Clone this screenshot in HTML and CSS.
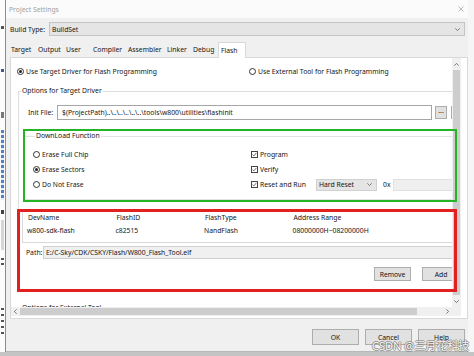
FILE: index.html
```html
<!DOCTYPE html>
<html>
<head>
<meta charset="utf-8">
<link rel="stylesheet" href="styles.css">
</head>
<body>
<div class="screen">
  <div class="bgwin">
    <div class="bm m1"></div>
    <div class="bm m2"></div>
    <div class="bm m3"></div>
    <div class="bm m4"></div>
    <div class="bm m5"></div>
    <div class="bm m6"></div>
    <div class="bm m7"></div>
    <div class="bm m8"></div>
  </div>
  <div class="dialog">
    <div class="titlebar">
      <span class="title">Project Settings</span>
      <svg class="close" width="6" height="6" viewBox="0 0 6 6"><path d="M0.5 0.5L5.5 5.5M5.5 0.5L0.5 5.5" stroke="#a8a8a8" stroke-width="0.8" fill="none"/></svg>
    </div>
    <div class="buildrow">
      <span class="lbl">Build Type:</span>
      <div class="combo wide"><span>BuildSet</span><svg width="5" height="3" viewBox="0 0 5 3"><path d="M0.3 0.3L2.5 2.6L4.7 0.3" stroke="#666" stroke-width="0.8" fill="none"/></svg></div>
    </div>
    <div class="tabs">
      <div class="tab t1">Target</div>
      <div class="tab t2">Output</div>
      <div class="tab t3">User</div>
      <div class="tab t4">Compiler</div>
      <div class="tab t5">Assembler</div>
      <div class="tab t6">Linker</div>
      <div class="tab t7">Debug</div>
      <div class="tab t8 active">Flash</div>
    </div>
    <div class="pane">
      <div class="viewport">
        <div class="content">
          <div class="moderow">
            <div class="opt mode1"><span class="radio on"></span>Use Target Driver for Flash Programming</div>
            <div class="opt"><span class="radio"></span>Use External Tool for Flash Programming</div>
          </div>
          <fieldset class="grp opts">
            <legend>Options for Target Driver</legend>
            <div class="initrow">
              <span class="initlbl">Init File:</span>
              <div class="field initfield">$(ProjectPath)..\..\..\..\..\..\tools\w800\utilities\flashinit</div>
              <div class="btn sm">...</div>
              <div class="btn sm"></div>
            </div>
            <fieldset class="grp dl">
              <legend>DownLoad Function</legend>
              <div class="dlgrid">
                <div class="opt"><span class="radio"></span>Erase Full Chip</div>
                <div class="opt"><span class="check"><svg width="5" height="5" viewBox="0 0 5 5"><path d="M0.6 2.6L1.9 3.9L4.4 0.9" stroke="#333" stroke-width="0.7" fill="none"/></svg></span>Program</div>
                <div class="opt"><span class="radio on"></span>Erase Sectors</div>
                <div class="opt"><span class="check"><svg width="5" height="5" viewBox="0 0 5 5"><path d="M0.6 2.6L1.9 3.9L4.4 0.9" stroke="#333" stroke-width="0.7" fill="none"/></svg></span>Verify</div>
                <div class="opt"><span class="radio"></span>Do Not Erase</div>
                <div class="resetrow">
                  <div class="opt resetopt"><span class="check"><svg width="5" height="5" viewBox="0 0 5 5"><path d="M0.6 2.6L1.9 3.9L4.4 0.9" stroke="#333" stroke-width="0.7" fill="none"/></svg></span>Reset and Run</div>
                  <div class="combo hard"><span>Hard Reset</span><svg width="5" height="3" viewBox="0 0 5 3"><path d="M0.3 0.3L2.5 2.6L4.7 0.3" stroke="#666" stroke-width="0.8" fill="none"/></svg></div>
                  <span class="hex">0x</span>
                  <div class="field hexfield"></div>
                </div>
              </div>
            </fieldset>
            <div class="flash">
              <div class="tbl">
                <div class="trow head"><span>DevName</span><span>FlashID</span><span>FlashType</span><span>Address Range</span></div>
                <div class="trow data"><span>w800-sdk-flash</span><span>c82515</span><span>NandFlash</span><span>08000000H~08200000H</span></div>
              </div>
              <div class="pathrow">
                <span class="pathlbl">Path:</span>
                <div class="field pathfield">E:/C-Sky/CDK/CSKY/Flash/W800_Flash_Tool.elf</div>
              </div>
              <div class="btnrow">
                <div class="btn remove">Remove</div>
                <div class="btn add">Add</div>
              </div>
            </div>
          </fieldset>
          <fieldset class="grp ext">
            <legend>Options for External Tool</legend>
            <div class="extbody"></div>
          </fieldset>
        </div>
      </div>
      <div class="vscroll">
        <div class="arrow"><svg width="5" height="3" viewBox="0 0 5 3"><path d="M0.3 2.7L2.5 0.4L4.7 2.7" stroke="#606060" stroke-width="0.8" fill="none"/></svg></div>
        <div class="vthumb"></div>
        <div class="arrow"><svg width="5" height="3" viewBox="0 0 5 3"><path d="M0.3 0.3L2.5 2.6L4.7 0.3" stroke="#606060" stroke-width="0.8" fill="none"/></svg></div>
      </div>
      <div class="hscroll">
        <div class="arrow"><svg width="3" height="5" viewBox="0 0 3 5"><path d="M2.7 0.3L0.4 2.5L2.7 4.7" stroke="#606060" stroke-width="0.8" fill="none"/></svg></div>
        <div class="hthumb"></div>
        <div class="htrack"></div>
        <div class="arrow"><svg width="3" height="5" viewBox="0 0 3 5"><path d="M0.3 0.3L2.6 2.5L0.3 4.7" stroke="#606060" stroke-width="0.8" fill="none"/></svg></div>
      </div>
      <div class="corner"></div>
    </div>
    <div class="footer">
      <div class="btn dbtn">OK</div>
      <div class="btn dbtn">Cancel</div>
      <div class="btn dbtn">Help</div>
    </div>
  </div>
  <div class="rightbg"></div>
</div>
<div class="bottombg"></div>
<div class="anno green"></div>
<div class="anno red"></div>
<div class="watermark">CSDN @三月花科技</div>
</body>
</html>
```

FILE: styles.css
```css
* { box-sizing: border-box; margin: 0; padding: 0; }
body {
  width: 474px; height: 356px; overflow: hidden; position: relative;
  font-family: "Noto Sans", "DejaVu Sans", sans-serif; font-size: 6.8px; color: #151515;
  background: #c9c9c9; display: flex; flex-direction: column;
}
.screen { display: flex; height: 352px; }
.bottombg { flex: 1; background: #c4c4c4; }

/* background window strip */
.bgwin { width: 5px; background: #fcfcfc; display: flex; flex-direction: column; padding-left: 1px; }
.bm { width: 3px; }
.m1 { margin-top: 26px; height: 3px; background: #555; }
.m2 { margin-top: 40px; height: 3px; background: #3c5a8a; }
.m3 { margin-top: 40px; height: 6px; background: #777; }
.m4 { margin-top: 12px; height: 70px; background: repeating-linear-gradient(#4f80c8 0 3px, #e8eef8 3px 5px); }
.m5 { margin-top: 10px; height: 4px; background: #444; }
.m6 { margin-top: 6px; height: 30px; background: #d6d6d6; }
.m7 { margin-top: 8px; height: 10px; background: repeating-linear-gradient(#555 0 2px, #fcfcfc 2px 5px); }
.m8 { margin-top: 40px; height: 30px; background: repeating-linear-gradient(#555 0 2px, #fcfcfc 2px 6px); }

.dialog { width: 463px; background: #f0f0f0; border-left: 1px solid #8c8c8c; display: flex; flex-direction: column; }
.rightbg { flex: 1; background: #f6f6f6; }

.titlebar { height: 18px; background: #fbfbfb; display: flex; align-items: center; justify-content: space-between; padding: 0 4px 0 3px; color: #a0a0a0; }

.buildrow { display: flex; align-items: center; padding: 4px 3px 0 4px; height: 18px; }
.lbl { width: 39px; }
.combo { height: 14px; background: #e5e5e5; border: 1px solid #c4c4c4; display: flex; align-items: center; justify-content: space-between; padding: 0 4px 0 2px; }
.combo.wide { flex: 1; }

.tabs { display: flex; height: 15px; margin: 6px 0 0 3px; align-items: flex-start; position: relative; z-index: 1; }
.tab { height: 15px; display: flex; align-items: center; padding-left: 2px; }
.t1 { width: 27px; }
.t2 { width: 28px; }
.t3 { width: 27px; }
.t4 { width: 35px; }
.t5 { width: 39px; }
.t6 { width: 26px; }
.t7 { width: 27px; }
.t8 { width: 28px; }
.tab.active { height: 16px; background: #fff; border: 1px solid #d9d9d9; border-bottom: none; padding-left: 2px; }

.pane {
  margin-left: 4px; height: 262px; background: #fff; border: 1px solid #d9d9d9;
  padding: 0 6px 2px 0; display: grid; grid-template-columns: 441px 9px; grid-template-rows: 249px 9px;
}
.viewport { overflow: hidden; }
.content { width: 480px; }

.moderow { display: flex; align-items: center; height: 18px; padding: 8px 0 0 6px; }
.opt { display: flex; align-items: center; height: 10px; white-space: nowrap; }
.mode1 { width: 232px; }
.radio { width: 7px; height: 7px; border: 1px solid #333; border-radius: 50%; margin-right: 2px; display: flex; align-items: center; justify-content: center; background: #fff; }
.radio.on::after { content: ""; width: 3px; height: 3px; border-radius: 50%; background: #222; }
.check { width: 7px; height: 7px; border: 1px solid #444; margin-right: 2px; display: flex; align-items: center; justify-content: center; background: #fff; }

.grp { border: 1px solid #dedede; min-width: 0; }
.grp legend { line-height: 10px; padding: 0 1px; margin-left: 2px; }
.opts { margin: 10px 0 0 7px; padding-bottom: 9px; }

.initrow { display: flex; align-items: center; margin: 9px 0 0 9px; height: 15px; }
.initlbl { width: 29px; }
.field { height: 100%; border: 1px solid #a6a6a6; background: #fff; display: flex; align-items: center; padding-left: 3px; white-space: nowrap; overflow: hidden; }
.initfield { width: 375px; padding-left: 4px; }
.btn { background: #e1e1e1; border: 1px solid #adadad; display: flex; align-items: center; justify-content: center; }
.btn.sm { width: 12px; height: 13px; margin-left: 3px; line-height: 6px; padding-bottom: 3px; }
.btn.sm + .btn.sm { margin-left: 4px; }

.dl { margin: 11px 0 0 5px; padding: 6px 0 7px 8px; border-color: #e2e2e2; }
.dlgrid { display: grid; grid-template-columns: 218px 1fr; grid-auto-rows: 15px; align-items: center; }
.resetrow { display: flex; align-items: center; height: 12px; }
.resetopt { width: 65px; }
.combo.hard { width: 61px; height: 12px; border-color: #d0d0d0; padding-left: 2px; padding-right: 4px; }
.hex { width: 10px; margin-left: 6px; }
.hexfield { width: 70px; height: 12px; background: #efefef; border-color: #e0e0e0; }

.flash { margin-top: 10px; }
.tbl { margin-left: 3px; border: 1px solid #d9d9d9; height: 33px; }
.trow { display: flex; align-items: center; padding-left: 5px; }
.trow span { width: 88.5px; white-space: nowrap; }
.trow.head { height: 12px; }
.trow.data { height: 14px; padding-left: 4px; }
.pathrow { display: flex; align-items: center; height: 13px; margin: 3px 0 0 7px; }
.pathlbl { width: 17px; }
.pathfield { flex: 1; background: #f0f0f0; border-color: #cfcfcf; padding-left: 2px; }
.btnrow { display: flex; height: 14px; margin-top: 8px; padding-left: 355px; gap: 11px; }
.remove { width: 37px; }
.add { width: 32px; padding-left: 6px; }

.ext { margin: 12px 0 0 7px; }
.extbody { height: 20px; }

.vscroll { background: #f0f0f0; display: flex; flex-direction: column; }
.vscroll .arrow { height: 12px; display: flex; align-items: center; justify-content: center; }
.vthumb { flex: 1; background: #cdcdcd; margin: 0 1px; }
.hscroll { background: #f0f0f0; display: flex; }
.hscroll .arrow { width: 9px; display: flex; align-items: center; justify-content: center; }
.hthumb { width: 397px; background: #cdcdcd; margin: 1px 0; }
.htrack { flex: 1; }
.corner { background: #f0f0f0; }

.footer { height: 33px; display: flex; justify-content: flex-end; align-items: flex-start; gap: 6px; padding: 10px 3px 0 0; border-bottom: 1px solid #b8b8b8; }
.dbtn { width: 47px; height: 16px; }

.anno { position: absolute; pointer-events: none; }
.green { left: 23px; top: 129px; width: 434px; height: 73px; border: 2px solid #25b425; }
.red { left: 17px; top: 209px; width: 440px; height: 83px; border: 3px solid #e32020; }

.watermark {
  position: absolute; left: 372px; top: 339px;
  font-family: "Noto Sans", "Noto Sans CJK SC", sans-serif; font-size: 11px; line-height: 13px;
  color: rgba(255,255,255,0.92);
  text-shadow: 1px 0 0 rgba(120,120,120,0.7), -1px 0 0 rgba(120,120,120,0.7), 0 1px 0 rgba(120,120,120,0.7), 0 -1px 0 rgba(120,120,120,0.7);
  white-space: nowrap;
}
```
